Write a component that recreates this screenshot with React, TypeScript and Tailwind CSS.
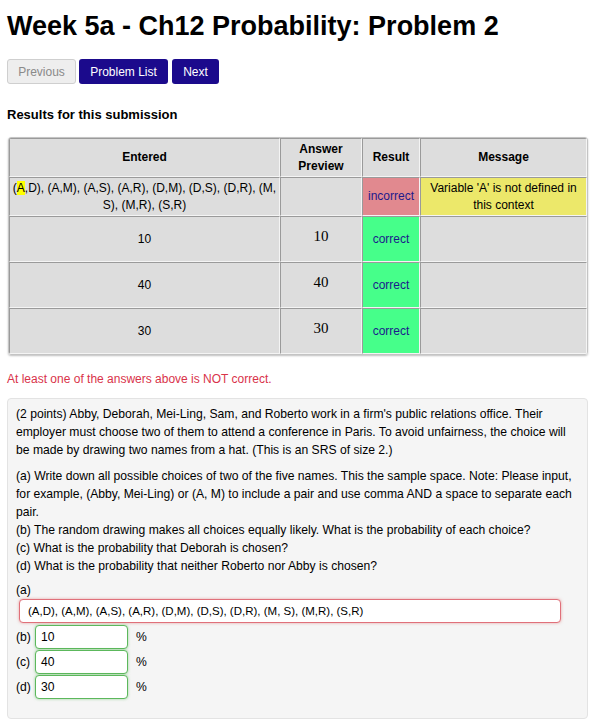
import React from "react";

const cell =
  "border border-t-[#9a9a9a] border-l-[#9a9a9a] border-r-[#f4f4f4] border-b-[#f4f4f4] text-center align-middle px-[2px]";

const rows = [
  { entered: "10", preview: "10" },
  { entered: "40", preview: "40" },
  { entered: "30", preview: "30" },
];

function ResultsTable() {
  return (
    <div className="ml-[8px] w-[580px] rounded-[3px] border border-[#c4c4c4] shadow-[0_1px_2px_rgba(0,0,0,0.25)] overflow-hidden">
      <table className="w-full table-fixed border-separate border-spacing-0 text-[12px] leading-[17px] text-black">
        <colgroup>
          <col className="w-[271px]" />
          <col className="w-[82px]" />
          <col className="w-[58px]" />
          <col />
        </colgroup>
        <thead>
          <tr className="h-[39px] bg-[#dddddd]">
            <th className={`${cell} font-bold`}>Entered</th>
            <th className={`${cell} font-bold`}>
              Answer
              <br />
              Preview
            </th>
            <th className={`${cell} font-bold`}>Result</th>
            <th className={`${cell} font-bold`}>Message</th>
          </tr>
        </thead>
        <tbody>
          <tr className="h-[39px]">
            <td className={`${cell} bg-[#dddddd]`}>
              (<span className="bg-[#ffff00]">A</span>,D), (A,M), (A,S), (A,R), (D,M), (D,S), (D,R), (M,
              S), (M,R), (S,R)
            </td>
            <td className={`${cell} bg-[#dddddd]`}></td>
            <td className={`${cell} bg-[#e1898f] text-[#1c1a8c]`}>incorrect</td>
            <td className={`${cell} bg-[#ece86a]`}>Variable 'A' is not defined in this context</td>
          </tr>
          {rows.map((r) => (
            <tr key={r.entered} className="h-[46px]">
              <td className={`${cell} bg-[#dddddd]`}>{r.entered}</td>
              <td className={`${cell} bg-[#dddddd]`}>
                <span className="relative -top-[2px] font-['Liberation_Serif',serif] text-[15px]">{r.preview}</span>
              </td>
              <td className={`${cell} bg-[#46ff8a] text-[#1c1a8c]`}>correct</td>
              <td className={`${cell} bg-[#dddddd]`}></td>
            </tr>
          ))}
        </tbody>
      </table>
    </div>
  );
}

function AnswerRow({ label, value }: { label: string; value: string }) {
  return (
    <div className="flex items-center h-[25px]">
      <span className="w-[19px]">{label}</span>
      <div className="w-[93px] h-[24px] rounded-[4px] border border-[#5cb85c] bg-white shadow-[0_0_3px_rgba(92,184,92,0.6)] px-[5px] flex items-center">
        {value}
      </div>
      <span className="ml-[8px]">%</span>
    </div>
  );
}

export default function App() {
  return (
    <div className="min-h-[728px] bg-white font-['Liberation_Sans',Arial,sans-serif] text-black">
      <h1 className="pt-[11px] pl-[7px] text-[27px] leading-[31px] font-bold">
        Week 5a - Ch12 Probability: Problem 2
      </h1>

      <div className="mt-[17px] ml-[7px] flex gap-[3px] text-[12px]">
        <button className="h-[25px] w-[69px] rounded-[3px] border border-[#cfcfcf] bg-[#eeeeee] text-[#8a8a8a]">
          Previous
        </button>
        <button className="h-[25px] w-[89px] rounded-[3px] bg-[#1b0a8c] text-white">Problem List</button>
        <button className="ml-[1px] h-[25px] w-[47px] rounded-[3px] bg-[#1b0a8c] text-white">Next</button>
      </div>

      <h2 className="mt-[23px] ml-[7px] text-[13px] leading-[16px] font-bold">Results for this submission</h2>

      <div className="mt-[14px]">
        <ResultsTable />
      </div>

      <p className="mt-[16px] ml-[7px] text-[12px] leading-[16px] text-[#d9334a]">
        At least one of the answers above is NOT correct.
      </p>

      <div className="mt-[11px] ml-[7px] w-[581px] h-[321px] rounded-[4px] border border-[#e3e3e3] bg-[#f5f5f5] px-[8px] pt-[6px] text-[12.15px] leading-[18px]">
        <p>
          (2 points) Abby, Deborah, Mei-Ling, Sam, and Roberto work in a firm's public relations office. Their
          employer must choose two of them to attend a conference in Paris. To avoid unfairness, the choice will be
          made by drawing two names from a hat. (This is an SRS of size 2.)
        </p>
        <p className="mt-[8px]">
          (a) Write down all possible choices of two of the five names. This the sample space. Note: Please input,
          for example, (Abby, Mei-Ling) or (A, M) to include a pair and use comma AND a space to separate each pair.
          <br />
          (b) The random drawing makes all choices equally likely. What is the probability of each choice?
          <br />
          (c) What is the probability that Deborah is chosen?
          <br />
          (d) What is the probability that neither Roberto nor Abby is chosen?
        </p>
        <div className="mt-[6px] leading-[18px]">(a)</div>
        <div className="ml-[3px] w-[542px] h-[24px] rounded-[4px] border border-[#e0707a] bg-white shadow-[0_0_3px_rgba(217,83,79,0.5)] px-[8px] flex items-center text-[11.5px]">
          (A,D), (A,M), (A,S), (A,R), (D,M), (D,S), (D,R), (M, S), (M,R), (S,R)
        </div>
        <div className="mt-[1px]">
          <AnswerRow label="(b)" value="10" />
          <AnswerRow label="(c)" value="40" />
          <AnswerRow label="(d)" value="30" />
        </div>
      </div>
    </div>
  );
}
